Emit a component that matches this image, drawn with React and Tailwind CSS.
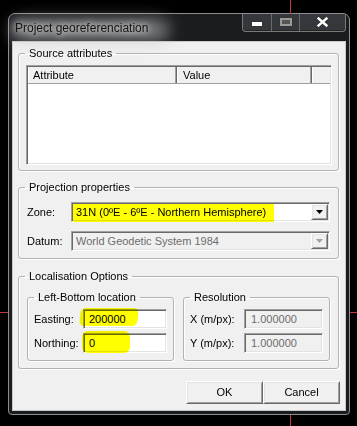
import React from 'react'

const SUNKEN =
  'border border-t-[#a0a0a0] border-l-[#a0a0a0] border-r-white border-b-white shadow-[inset_1px_1px_0_#696969,inset_-1px_-1px_0_#e3e3e3]'
const RAISED =
  'border border-t-white border-l-white border-r-[#696969] border-b-[#696969] shadow-[inset_1px_1px_0_#e3e3e3,inset_-1px_-1px_0_#a0a0a0]'

function Group({ title, className = '', children }) {
  return (
    <fieldset className={`rounded-[3px] border border-[#b2b2b2] shadow-[inset_1px_1px_0_#fff,1px_1px_0_#fff] ${className}`}>
      <legend className="ml-[6px] px-[4px] text-[11px] leading-[13px] text-black">{title}</legend>
      {children}
    </fieldset>
  )
}

function Arrow({ color }) {
  return (
    <svg width="7" height="4" viewBox="0 0 7 4">
      <polygon points="0,0 7,0 3.5,4" fill={color} />
    </svg>
  )
}

function Combo({ text, disabled, highlight }) {
  return (
    <div className={`relative flex h-[20px] w-[259px] items-center p-[1px] ${SUNKEN} ${disabled ? 'bg-[#f0f0f0]' : 'bg-white'}`}>
      <span className={`flex-1 pl-[3px] text-[11px] leading-[13px] whitespace-nowrap ${disabled ? 'text-[#6d6d6d]' : 'text-black'}`}>
        {text}
      </span>
      <div className={`flex h-[16px] w-[17px] items-center justify-center bg-[#f0f0f0] ${RAISED}`}>
        <Arrow color={disabled ? '#a0a0a0' : '#000'} />
      </div>
      {highlight && (
        <span className="pointer-events-none absolute left-[1px] top-[1px] h-[18px] w-[201px] bg-[#ffff00] mix-blend-multiply" />
      )}
    </div>
  )
}

function Field({ label, labelW, inputW, value, disabled, mark }) {
  return (
    <div className="flex items-center">
      <span className={`${labelW} text-[11px] leading-[13px] text-black`}>{label}</span>
      <div className={`relative flex h-[20px] ${inputW} items-center ${SUNKEN} ${disabled ? 'bg-[#f0f0f0]' : 'bg-white'}`}>
        <span className={`text-[11px] leading-[13px] ${disabled ? 'pl-[6px] text-[#6d6d6d]' : 'pl-[5px] text-black'}`}>{value}</span>
        {mark === 'east' && (
          <span className="pointer-events-none absolute left-[-4px] top-[-2px] h-[18px] w-[58px] -skew-x-6 rounded-[5px] bg-[#ffff00] mix-blend-multiply" />
        )}
        {mark === 'north' && (
          <span className="pointer-events-none absolute left-[-2px] top-[-3px] h-[22px] w-[48px] rounded-[6px] bg-[#ffff00] mix-blend-multiply" />
        )}
      </div>
    </div>
  )
}

export default function App() {
  return (
    <div className="relative h-[426px] w-[357px] overflow-hidden bg-black pl-[8px] pt-[13px] font-['Liberation_Sans',Arial,sans-serif]">
      {/* map crosshair lines behind the dialog */}
      <div className="absolute left-[290px] top-0 h-[14px] w-[1px] bg-[#c23a3a]" />
      <div className="absolute left-[290px] top-[415px] h-[11px] w-[1px] bg-[#c23a3a]" />
      <div className="absolute left-0 top-[312px] h-[1px] w-[8px] bg-[#c23a3a]" />
      <div className="absolute left-[350px] top-[312px] h-[1px] w-[7px] bg-[#c23a3a]" />

      <div className="flex h-[402px] w-[342px] flex-col rounded-t-[7px] rounded-b-[4px] border border-[#8e8e8e] bg-[#1a1d20] px-[3px] pb-[3px]">
        {/* title bar */}
        <div className="relative -mx-[3px] flex h-[27px] items-start">
          <div className="absolute left-[2px] top-[5px] h-[22px] w-[158px] rounded-full bg-[#bdbdbd] opacity-60 blur-[8px]" />
          <span className="relative pl-[6px] pt-[7px] text-[12px] leading-[14px] text-[#151515] [text-shadow:0_0_6px_#eee,0_0_10px_#ddd]">
            Project georeferenciation
          </span>
          <div className="relative ml-auto mr-[3px] flex h-[18px] rounded-b-[4px] border-x border-b border-[#7a7a7a] bg-[#34373b] shadow-[inset_0_-1px_0_#222]">
            <div className="flex w-[28px] justify-center pt-[8px]">
              <span className="h-[4px] w-[10px] bg-white shadow-[0_0_0_1px_#333]" />
            </div>
            <div className="flex w-[28px] justify-center border-l border-[#6a6a6a] pt-[4px]">
              <span className="h-[8px] w-[12px] border-2 border-[#9a9a9a] bg-[#555] shadow-[0_0_0_1px_#333]" />
            </div>
            <div className="flex w-[46px] justify-center border-l border-[#6a6a6a] pt-[3px]">
              <svg width="11" height="10" viewBox="0 0 11 10">
                <path d="M1.5 1.5 L9.5 8.5 M9.5 1.5 L1.5 8.5" stroke="#333" strokeWidth="4" strokeLinecap="square" />
                <path d="M1.5 1.5 L9.5 8.5 M9.5 1.5 L1.5 8.5" stroke="#fff" strokeWidth="2.4" strokeLinecap="square" />
              </svg>
            </div>
          </div>
        </div>

        {/* client area */}
        <div className="flex h-[370px] w-[334px] flex-col border border-[#c9c9c9] bg-[#f0f0f0] pl-[5px]">
          <Group title="Source attributes" className="mt-[5px] w-[321px]">
            <div className={`mb-[5px] ml-[7px] mt-[5px] h-[100px] w-[306px] bg-white p-[1px] ${SUNKEN}`}>
              <div className="flex h-[17px] overflow-hidden border-b border-[#a0a0a0] bg-[#f0f0f0]">
                <div className="flex w-[148px] items-center border-l border-r border-l-white border-r-[#a0a0a0] pl-[4px] text-[11px] text-black shadow-[1px_0_0_#696969]">
                  Attribute
                </div>
                <div className="ml-[1px] flex w-[134px] items-center border-l border-r border-l-white border-r-[#a0a0a0] pl-[5px] text-[11px] text-black shadow-[1px_0_0_#696969]">
                  Value
                </div>
                <div className="ml-[1px] flex-1 border-l border-white" />
              </div>
            </div>
          </Group>

          <Group title="Projection properties" className="mt-[10px] w-[321px]">
            <div className="mt-[8px] flex items-center pl-[8px]">
              <span className="w-[44px] text-[11px] leading-[13px] text-black">Zone:</span>
              <Combo text="31N (0ºE - 6ºE - Northern Hemisphere)" highlight />
            </div>
            <div className="mb-[7px] mt-[9px] flex items-center pl-[8px]">
              <span className="w-[44px] text-[11px] leading-[13px] text-black">Datum:</span>
              <Combo text="World Geodetic System 1984" disabled />
            </div>
          </Group>

          <Group title="Localisation Options" className="mt-[11px] w-[321px]">
            <div className="mb-[7px] ml-[8px] mt-[8px] flex gap-[9px]">
              <Group title="Left-Bottom location" className="w-[147px]">
                <div className="mb-[7px] mt-[5px] flex flex-col gap-[4px] pl-[6px]">
                  <Field label="Easting:" labelW="w-[49px]" inputW="w-[84px]" value="200000" mark="east" />
                  <Field label="Northing:" labelW="w-[49px]" inputW="w-[84px]" value="0" mark="north" />
                </div>
              </Group>
              <Group title="Resolution" className="w-[147px]">
                <div className="mb-[7px] mt-[5px] flex flex-col gap-[4px] pl-[6px]">
                  <Field label="X (m/px):" labelW="w-[54px]" inputW="w-[79px]" value="1.000000" disabled />
                  <Field label="Y (m/px):" labelW="w-[54px]" inputW="w-[79px]" value="1.000000" disabled />
                </div>
              </Group>
            </div>
          </Group>

          <div className="mt-[12px] flex justify-end pr-[5px]">
            <button className={`h-[23px] w-[77px] bg-[#f0f0f0] text-[11px] text-black ${RAISED}`}>OK</button>
            <button className={`h-[23px] w-[77px] bg-[#f0f0f0] text-[11px] text-black ${RAISED}`}>Cancel</button>
          </div>
        </div>
      </div>
    </div>
  )
}
